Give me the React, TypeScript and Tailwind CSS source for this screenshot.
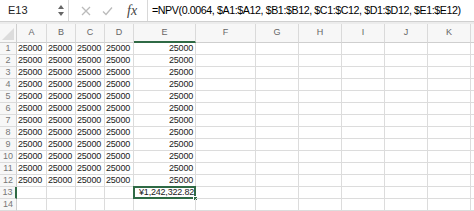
import { Fragment } from "react";

const cols = ["A", "B", "C", "D", "E", "F", "G", "H", "I", "J", "K"];
const rows = Array.from({ length: 14 }, (_, i) => i + 1);

function Cell({ col, row }: { col: string; row: number }) {
  const selected = col === "E" && row === 13;
  let text = "";
  let align = "justify-start pl-[1px]";
  if (row <= 12 && ["A", "B", "C", "D"].includes(col)) text = "25000";
  if (row <= 12 && col === "E") {
    text = "25000";
    align = "justify-end pr-[2px]";
  }
  if (selected) {
    text = "¥1,242,322.82";
    align = "justify-end pr-[1px]";
  }
  return (
    <div className={`relative flex items-center whitespace-nowrap border-r border-b border-[#dcdcdc] text-[9px] leading-none tracking-[-0.2px] text-[#1a1a1a] ${align}`}>
      {text}
      {selected && (
        <>
          <div className="absolute -left-[1px] -top-[1px] -right-[1px] -bottom-[1px] border-2 border-[#2f6a45]" />
          <div className="absolute -right-[3px] -bottom-[3px] h-[5px] w-[5px] border border-white bg-[#2f6a45]" />
        </>
      )}
    </div>
  );
}

export default function App() {
  return (
    <div className="h-[211px] w-[474px] overflow-hidden bg-white font-['Liberation_Sans',Arial,sans-serif]">
      <div className="flex h-[22px] items-center border-b border-[#d0d0d0]">
        <div className="flex h-full w-[69px] shrink-0 items-center justify-between border-r border-[#d8d8d8] pl-[8px] pr-[4px]">
          <span className="text-[11px] text-[#222]">E13</span>
          <div className="flex flex-col items-center gap-[3px]">
            <svg width="6" height="4" viewBox="0 0 6 4"><path d="M0 4L3 0L6 4Z" fill="#666" /></svg>
            <svg width="6" height="4" viewBox="0 0 6 4"><path d="M0 0L3 4L6 0Z" fill="#666" /></svg>
          </div>
        </div>
        <div className="flex h-full w-[79px] shrink-0 items-center border-r border-[#d8d8d8] pl-[12px]">
          <svg width="10" height="10" viewBox="0 0 10 10" className="mr-[11px]">
            <path d="M1 1L9 9M9 1L1 9" stroke="#bbb" strokeWidth="1.3" />
          </svg>
          <svg width="11" height="10" viewBox="0 0 11 10" className="mr-[14px]">
            <path d="M1 5.5L4 8.5L10 1.5" stroke="#bbb" strokeWidth="1.3" fill="none" />
          </svg>
          <span className="font-['Liberation_Serif',serif] text-[14px] italic text-[#444]">fx</span>
        </div>
        <div className="whitespace-nowrap pl-[4px] text-[10.7px] tracking-[-0.42px] text-black">
          =NPV(0.0064, $A1:$A12, $B1:$B12, $C1:$C12, $D1:$D12, $E1:$E12)
        </div>
      </div>
      <div className="h-[2px] bg-[#ececec]" />
      <div className="grid grid-cols-[17px_30px_29px_29px_29px_62px_60px_43px_43px_43px_43px_43px_3px] grid-rows-[19px_repeat(14,12px)]">
        <div className="relative border-r border-b border-[#cfcfcf] bg-[#f7f7f7]">
          <svg width="12" height="12" viewBox="0 0 12 12" className="absolute bottom-[2px] right-[2px]">
            <path d="M12 0L12 12L0 12Z" fill="#dcdcdc" />
          </svg>
        </div>
        {cols.map((c) => (
          <div
            key={c}
            className={`flex items-center justify-center border-r border-[#dadada] bg-[#f7f7f7] text-[9px] text-[#666] ${
              c === "E" ? "border-b-2 border-b-[#2f6a45]" : "border-b border-b-[#cfcfcf]"
            }`}
          >
            {c}
          </div>
        ))}
        <div className="border-b border-[#cfcfcf] bg-[#f7f7f7]" />
        {rows.map((r) => (
          <Fragment key={r}>
            <div
              className={`flex items-center justify-center border-b border-[#dcdcdc] bg-[#f7f7f7] text-[9px] leading-none text-[#777] ${
                r === 13 ? "border-r-2 border-r-[#2f6a45]" : "border-r border-r-[#cfcfcf]"
              }`}
            >
              {r}
            </div>
            {cols.map((c) => (
              <Cell key={`${c}${r}`} col={c} row={r} />
            ))}
            <div className="border-b border-[#dcdcdc]" />
          </Fragment>
        ))}
      </div>
    </div>
  );
}
